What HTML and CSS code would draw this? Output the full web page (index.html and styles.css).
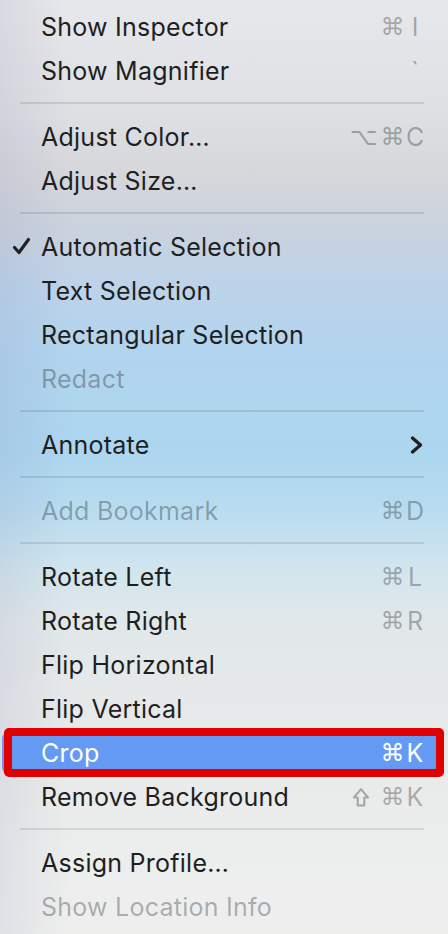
FILE: index.html
```html
<!DOCTYPE html>
<html>
<head>
<meta charset="utf-8">
<link rel="stylesheet" href="styles.css">
</head>
<body>
<div class="menu">
  <div class="item"><span class="gut"></span><span class="label">Show Inspector</span><span class="sc"><span class="mod">⌘</span><span class="key">I</span></span></div>
  <div class="item"><span class="gut"></span><span class="label">Show Magnifier</span><span class="sc"><span class="key">`</span></span></div>
  <div class="sep"></div>
  <div class="item"><span class="gut"></span><span class="label">Adjust Color…</span><span class="sc"><span class="mod opt">⌥</span><span class="mod">⌘</span><span class="key">C</span></span></div>
  <div class="item"><span class="gut"></span><span class="label">Adjust Size…</span><span class="sc"></span></div>
  <div class="sep"></div>
  <div class="item"><span class="gut"><svg class="check" width="20" height="20" viewBox="0 0 20 20"><path d="M2.5 10.5 L7 15.5 L16.5 2.5" fill="none" stroke="#222" stroke-width="3.2" stroke-linecap="round" stroke-linejoin="round"/></svg></span><span class="label">Automatic Selection</span><span class="sc"></span></div>
  <div class="item"><span class="gut"></span><span class="label">Text Selection</span><span class="sc"></span></div>
  <div class="item"><span class="gut"></span><span class="label">Rectangular Selection</span><span class="sc"></span></div>
  <div class="item disabled"><span class="gut"></span><span class="label">Redact</span><span class="sc"></span></div>
  <div class="sep"></div>
  <div class="item"><span class="gut"></span><span class="label">Annotate</span><span class="sc"><svg class="chev" width="13" height="18" viewBox="0 0 13 18"><path d="M2.5 2 L10.5 9 L2.5 16" fill="none" stroke="#1e1e1e" stroke-width="3.2" stroke-linecap="round" stroke-linejoin="round"/></svg></span></div>
  <div class="sep"></div>
  <div class="item disabled"><span class="gut"></span><span class="label">Add Bookmark</span><span class="sc"><span class="mod">⌘</span><span class="key">D</span></span></div>
  <div class="sep"></div>
  <div class="item"><span class="gut"></span><span class="label">Rotate Left</span><span class="sc"><span class="mod">⌘</span><span class="key">L</span></span></div>
  <div class="item"><span class="gut"></span><span class="label">Rotate Right</span><span class="sc"><span class="mod">⌘</span><span class="key">R</span></span></div>
  <div class="item"><span class="gut"></span><span class="label">Flip Horizontal</span><span class="sc"></span></div>
  <div class="item"><span class="gut"></span><span class="label">Flip Vertical</span><span class="sc"></span></div>
  <div class="item active"><span class="gut"></span><span class="label">Crop</span><span class="sc"><span class="mod">⌘</span><span class="key">K</span></span></div>
  <div class="item"><span class="gut"></span><span class="label">Remove Background</span><span class="sc"><span class="mod"><svg class="shift" width="16" height="19" viewBox="0 0 16 19"><path d="M8 1.2 L15 9.4 L11.3 9.4 L11.3 17.6 L4.7 17.6 L4.7 9.4 L1 9.4 Z" fill="none" stroke="currentColor" stroke-width="2" stroke-linejoin="round"/></svg></span><span class="mod">⌘</span><span class="key">K</span></span></div>
  <div class="sep"></div>
  <div class="item"><span class="gut"></span><span class="label">Assign Profile…</span><span class="sc"></span></div>
  <div class="item disabled"><span class="gut"></span><span class="label">Show Location Info</span><span class="sc"></span></div>
</div>
</body>
</html>
```

FILE: styles.css
```css
html, body {
  margin: 0;
  padding: 0;
}
body {
  width: 448px;
  height: 934px;
  overflow: hidden;
  font-family: Inter, "Liberation Sans", sans-serif;
  background:
    linear-gradient(to right, rgba(120,120,170,0.12), rgba(120,120,170,0) 70px),
    linear-gradient(to bottom,
      #e6e8eb 0px,
      #dfe1e4 100px,
      #d5d7db 175px,
      #cad2de 230px,
      #bdd3ea 285px,
      #b2d4ee 350px,
      #acd6ef 450px,
      #b8dcef 510px,
      #d0e5ee 565px,
      #e1e8ea 620px,
      #e7e9e9 720px,
      #eceeed 850px,
      #eeefed 934px);
}
.menu {
  padding-top: 5px;
  display: flex;
  flex-direction: column;
}
.item {
  position: relative;
  height: 44px;
  margin: 0 8px 0 2px;
  padding: 0 16px 0 0;
  display: grid;
  grid-template-columns: 39px 1fr auto;
  align-items: center;
  font-size: 25px;
  color: #1f1f1f;
  letter-spacing: 0.25px;
  border-radius: 8px;
}
.gut {
  display: flex;
  align-items: center;
  height: 100%;
  padding-left: 10px;
}
.check {
  display: block;
}
.label {
  white-space: nowrap;
}
.sc {
  display: flex;
  align-items: center;
  color: rgba(0,0,0,0.3);
  letter-spacing: 0;
}
.mod {
  width: 27px;
  flex: 0 0 27px;
  display: flex;
  justify-content: center;
  align-items: center;
  font-family: "DejaVu Sans", sans-serif;
  font-size: 24px;
}
.opt {
  padding-right: 4px;
  box-sizing: border-box;
}
.shift {
  display: block;
  flex: 0 0 16px;
  width: 16px;
  height: 19px;
  margin-left: -9px;
}
.key {
  width: 18px;
  text-align: center;
}
.chev {
  display: block;
  margin-right: 1px;
}
.disabled {
  color: rgba(0,0,0,0.3);
}
.sep {
  height: 2px;
  margin: 9px 24px 11px 20px;
  background: rgba(0,0,0,0.1);
}
.active {
  background: #649af4;
  color: #ffffff;
}
.active .sc {
  color: #ffffff;
}
.active::after {
  content: "";
  position: absolute;
  left: 2px;
  right: -4px;
  top: -3px;
  bottom: -2px;
  border: 8px solid #e00000;
  border-radius: 5px;
}
```
